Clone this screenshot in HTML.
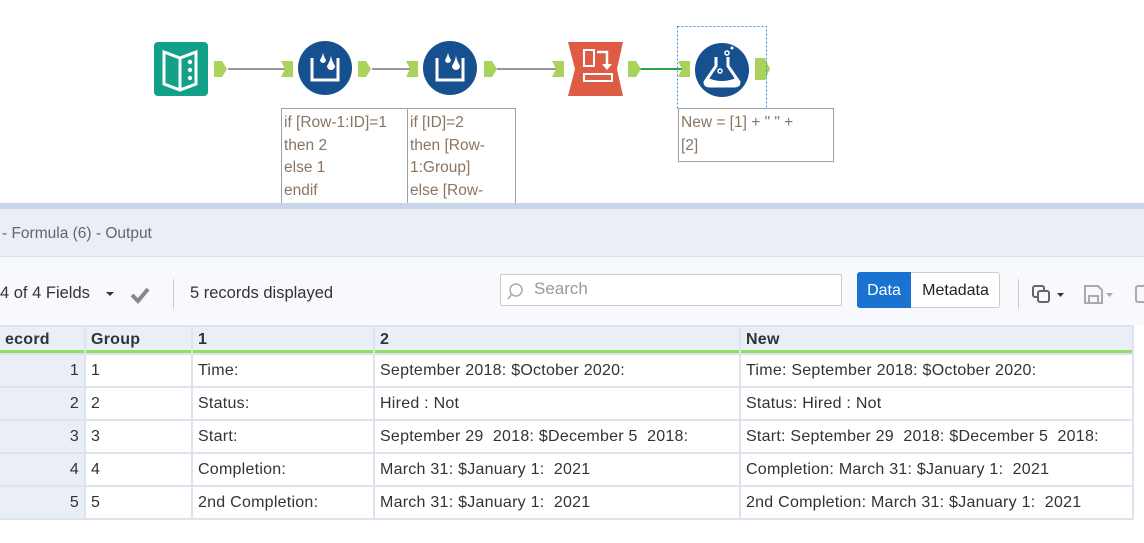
<!DOCTYPE html>
<html><head><style>
body{margin:0;width:1144px;height:543px;overflow:hidden;background:#fff;font-family:"Liberation Sans",sans-serif;position:relative}
.a{position:absolute}
.ann{position:absolute;border:1px solid #a0a0a0;background:#fff;color:#8a7560;font-size:15.5px;line-height:22.5px;padding:3px 2px 0 2px;box-sizing:border-box;overflow:hidden;white-space:nowrap}
table{border-collapse:separate;border-spacing:2px;position:absolute;left:-2px;top:325px;font-size:16px;letter-spacing:0.25px;color:#333;background:#dde4f0}
td,th{height:31px;padding:0 5px;background:#fff;white-space:nowrap;text-align:left}
th{background:#e9eef7;font-weight:bold;color:#333;border-bottom:3px solid #90e060;height:21px;padding-top:2px}
td.r{background:#e9eef7;text-align:right}
</style></head><body>
<div class="a" style="left:228px;top:68px;width:60px;height:2px;background:#999"></div>
<div class="a" style="left:372px;top:68px;width:40px;height:2px;background:#999"></div>
<div class="a" style="left:497px;top:68px;width:60px;height:2px;background:#999"></div>
<div class="a" style="left:637px;top:68px;width:45px;height:2px;background:#2ea44a"></div>
<svg class="a" style="left:0;top:0" width="1144" height="110">
<g fill="#a9d35a">
<path d="M214 61h8l5 8-5 8h-8z"/><path d="M281 61h12v16h-12l4-8z"/>
<path d="M358 61h8l5 8-5 8h-8z"/><path d="M406 61h12v16h-12l4-8z"/>
<path d="M484 61h8l5 8-5 8h-8z"/><path d="M552 61h12v16h-12l4-8z"/>
<path d="M628 61h8l5 8-5 8h-8z"/><path d="M678 61h12v16h-12l4-8z"/>
<path d="M755 58h10l5 11-5 11h-10z"/>
</g>
<rect x="154" y="42" width="54" height="54" rx="4" fill="#13a088"/>
<path d="M164 52l16 6 16-6v32l-16 6-16-6z" fill="none" stroke="#fff" stroke-width="3"/>
<path d="M180 58v32" stroke="#fff" stroke-width="3"/>
<circle cx="190" cy="62" r="2.2" fill="#fff"/><circle cx="190" cy="70" r="2.2" fill="#fff"/><circle cx="190" cy="78" r="2.2" fill="#fff"/>
<circle cx="325" cy="68" r="27" fill="#17508e"/>
<path d="M312 58v22h26v-22" fill="none" stroke="#fff" stroke-width="3"/>
<path d="M320 60q3 -5 3 -8q0 3 3 8a3 3 0 1 1-6 0z M327 66q4-7 4-11q0 4 4 11a4 4 0 1 1-8 0z" fill="#fff"/>
<circle cx="450" cy="68" r="27" fill="#17508e"/>
<path d="M437 58v22h26v-22" fill="none" stroke="#fff" stroke-width="3"/>
<path d="M445 60q3 -5 3 -8q0 3 3 8a3 3 0 1 1-6 0z M452 66q4-7 4-11q0 4 4 11a4 4 0 1 1-8 0z" fill="#fff"/>
<path d="M568 42h55l-6 27 6 27h-55l7-27z" fill="#de5b45"/>
<rect x="584" y="50" width="10" height="16" fill="none" stroke="#fff" stroke-width="2"/>
<path d="M597 52h10v14" fill="none" stroke="#fff" stroke-width="2.5"/><path d="M602 64l5 6 5-6z" fill="#fff"/>
<rect x="584" y="74" width="28" height="7" fill="none" stroke="#fff" stroke-width="2"/>
<rect x="677.5" y="26.5" width="89" height="82" fill="none" stroke="#3a8de0" stroke-dasharray="2 2"/>
<circle cx="722" cy="70" r="27" fill="#17508e"/>
<path d="M716 57v9l-11 16q0 4 5 4h24q5 0 5-4l-11-16v-9" fill="none" stroke="#fff" stroke-width="3"/>
<path d="M708 78q14 6 28 0l2 4q0 3-4 3h-24q-4 0-4-3z" fill="#fff"/>
<circle cx="727" cy="53" r="2" fill="none" stroke="#fff" stroke-width="1.5"/><circle cx="732" cy="48" r="1.5" fill="#fff"/><circle cx="720" cy="71" r="2" fill="none" stroke="#fff" stroke-width="1.5"/>
</svg>
<div class="ann" style="left:281px;top:108px;width:128px;height:100px">if [Row-1:ID]=1<br>then 2<br>else 1<br>endif</div>
<div class="ann" style="left:407px;top:108px;width:109px;height:100px">if [ID]=2<br>then [Row-<br>1:Group]<br>else [Row-</div>
<div class="ann" style="left:678px;top:108px;width:156px;height:54px">New = [1] + " " +<br>[2]</div>
<div class="a" style="left:0;top:203px;width:1144px;height:6px;background:#c9d5ea"></div>
<div class="a" style="left:0;top:209px;width:1144px;height:47px;background:#e9eef7;border-bottom:1px solid #d8dfec"></div>
<div class="a" style="left:2px;top:225px;font-size:15.5px;color:#666">- Formula (6) - Output</div>
<div class="a" style="left:0;top:257px;width:1144px;height:68px;background:#f7f9fd"></div>
<div class="a" style="left:0;top:284px;font-size:16.5px;color:#333">4 of 4 Fields</div>
<svg class="a" style="left:104px;top:286px" width="60" height="18"><path d="M2 6h8l-4 4z" fill="#333"/><path d="M28 9l6 6 10-12" fill="none" stroke="#888" stroke-width="4"/></svg>
<div class="a" style="left:173px;top:279px;width:1px;height:30px;background:#ccc"></div>
<div class="a" style="left:190px;top:284px;font-size:16.5px;color:#333">5 records displayed</div>
<div class="a" style="left:500px;top:274px;width:342px;height:32px;border:1px solid #ccc;background:#fff;border-radius:2px;box-sizing:border-box"></div>
<svg class="a" style="left:506px;top:282px" width="20" height="20"><circle cx="10" cy="8" r="6" fill="none" stroke="#aaa" stroke-width="1.5"/><path d="M6 12l-4 5" stroke="#aaa" stroke-width="1.5"/></svg>
<div class="a" style="left:534px;top:279px;font-size:17px;color:#999">Search</div>
<div class="a" style="left:857px;top:272px;width:143px;height:36px;border:1px solid #ccc;border-radius:3px;background:#fff;box-sizing:border-box"></div>
<div class="a" style="left:857px;top:272px;width:54px;height:36px;background:#1a73d0;border-radius:3px 0 0 3px;color:#fff;font-size:16px;line-height:38px;text-align:center">Data</div>
<div class="a" style="left:911px;top:272px;width:89px;height:36px;color:#222;font-size:16px;line-height:38px;text-align:center">Metadata</div>
<div class="a" style="left:1018px;top:279px;width:1px;height:30px;background:#ccc"></div>
<svg class="a" style="left:1030px;top:282px" width="114" height="24"><rect x="3" y="4" width="11" height="11" rx="2" fill="none" stroke="#666" stroke-width="2"/><rect x="8" y="9" width="11" height="11" rx="2" fill="#f7f9fd" stroke="#666" stroke-width="2"/><path d="M27 11h7l-3.5 4z" fill="#333"/><path d="M55 4h13l4 4v13h-17z" fill="none" stroke="#aaa" stroke-width="2"/><rect x="59" y="14" width="9" height="7" fill="none" stroke="#aaa" stroke-width="2"/><path d="M76 11h7l-3.5 4z" fill="#aaa"/><rect x="106" y="4" width="14" height="16" rx="2" fill="none" stroke="#aaa" stroke-width="2"/></svg>
<table>
<tr><th style="width:74px">ecord</th><th style="width:95px">Group</th><th style="width:170px">1</th><th style="width:354px">2</th><th style="width:381px">New</th></tr>
<tr><td class="r">1</td><td>1</td><td>Time:</td><td>September 2018: $October 2020:</td><td>Time: September 2018: $October 2020:</td></tr>
<tr><td class="r">2</td><td>2</td><td>Status:</td><td>Hired : Not</td><td>Status: Hired : Not</td></tr>
<tr><td class="r">3</td><td>3</td><td>Start:</td><td>September 29&nbsp; 2018: $December 5&nbsp; 2018:</td><td>Start: September 29&nbsp; 2018: $December 5&nbsp; 2018:</td></tr>
<tr><td class="r">4</td><td>4</td><td>Completion:</td><td>March 31: $January 1:&nbsp; 2021</td><td>Completion: March 31: $January 1:&nbsp; 2021</td></tr>
<tr><td class="r">5</td><td>5</td><td>2nd Completion:</td><td>March 31: $January 1:&nbsp; 2021</td><td>2nd Completion: March 31: $January 1:&nbsp; 2021</td></tr>
</table>
</body></html>
